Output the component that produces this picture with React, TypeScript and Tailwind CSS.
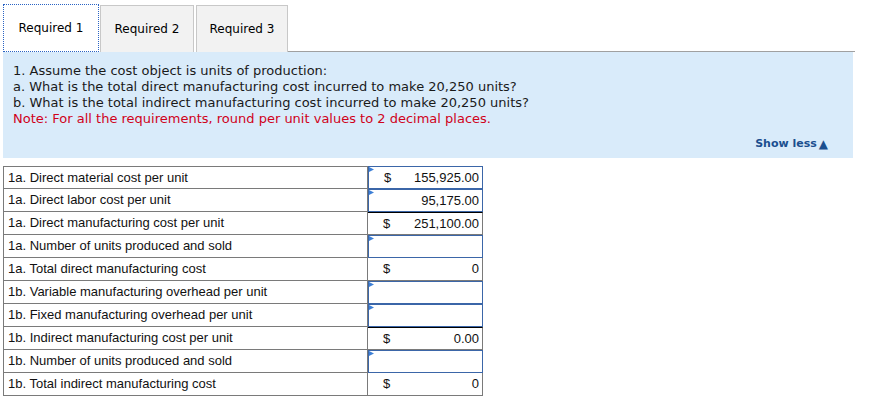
import React from "react";

type Row = { label: string; kind: "input" | "calc"; dollar?: boolean; value?: string; topBlack?: boolean };

const rows: Row[] = [
  { label: "1a. Direct material cost per unit", kind: "input", dollar: true, value: "155,925.00" },
  { label: "1a. Direct labor cost per unit", kind: "input", value: "95,175.00" },
  { label: "1a. Direct manufacturing cost per unit", kind: "calc", dollar: true, value: "251,100.00", topBlack: true },
  { label: "1a. Number of units produced and sold", kind: "input", value: "" },
  { label: "1a. Total direct manufacturing cost", kind: "calc", dollar: true, value: "0" },
  { label: "1b. Variable manufacturing overhead per unit", kind: "input", value: "" },
  { label: "1b. Fixed manufacturing overhead per unit", kind: "input", value: "" },
  { label: "1b. Indirect manufacturing cost per unit", kind: "calc", dollar: true, value: "0.00", topBlack: true },
  { label: "1b. Number of units produced and sold", kind: "input", value: "" },
  { label: "1b. Total indirect manufacturing cost", kind: "calc", dollar: true, value: "0" },
];

function ValueCell({ row }: { row: Row }) {
  const content = (
    <div className="flex h-full items-center justify-between pl-[15px] pr-[3px]">
      <span>{row.dollar ? "$" : ""}</span>
      <span>{row.value}</span>
    </div>
  );
  if (row.kind === "input") {
    return (
      <div className="relative h-[23px] w-[115px] border border-[#3b66a8]">
        <svg className="absolute left-0 top-0" width="6" height="6" viewBox="0 0 6 6">
          <polygon points="0,0 5,2.5 0,5" fill="#3d7fd6" />
        </svg>
        {content}
      </div>
    );
  }
  return (
    <div
      className={`h-[23px] w-[115px] border-r border-b border-[#7a7a7a] ${row.topBlack ? "border-t border-t-black" : ""}`}
    >
      {content}
    </div>
  );
}

export default function App() {
  return (
    <div className="h-[402px] w-[869px] bg-white" style={{ fontFamily: "'DejaVu Sans', Verdana, sans-serif" }}>
      <div className="flex items-end pl-[3px] pt-[4px]">
        <div className="flex h-[48px] w-[96px] items-center justify-center border border-dotted border-[#2a63c4] bg-white text-[12px] text-black">
          Required 1
        </div>
        <div className="ml-[1px] flex h-[47px] w-[94px] items-center justify-center border border-b-0 border-[#c8c8c8] bg-[#f2f2f2] text-[12px] text-black">
          Required 2
        </div>
        <div className="ml-[2px] flex h-[47px] w-[92px] items-center justify-center border border-b-0 border-[#c8c8c8] bg-[#f2f2f2] text-[12px] text-black">
          Required 3
        </div>
        <div className="h-[1px] flex-1 max-w-[567px] bg-[#a0a0a0]" />
      </div>
      <div className="ml-[3px] flex h-[106px] w-[850px] flex-col bg-[#d9ebfa] px-[10px] pt-[11px]">
        <div className="text-[13px] leading-[16px] text-[#1a1a1a]">
          <div>1. Assume the cost object is units of production:</div>
          <div>a. What is the total direct manufacturing cost incurred to make 20,250 units?</div>
          <div>b. What is the total indirect manufacturing cost incurred to make 20,250 units?</div>
          <div className="text-[#d0021b]">Note: For all the requirements, round per unit values to 2 decimal places.</div>
        </div>
        <div className="mt-[9px] flex items-center justify-end pr-[15px] text-[11px] font-bold text-[#1b4f8f]">
          <span>Show less</span>
          <span className="ml-[2px] text-[12px] leading-none">▲</span>
        </div>
      </div>
      <div
        className="ml-[3px] mt-[8px] w-[480px] text-[13px] text-[#111]"
        style={{ fontFamily: "'Liberation Sans', Arial, sans-serif" }}
      >
        {rows.map((row, i) => (
          <div key={i} className="flex">
            <div
              className={`flex h-[23px] w-[365px] items-center border-l border-r border-b border-[#7a7a7a] pl-[4px] ${i === 0 ? "border-t" : ""}`}
            >
              {row.label}
            </div>
            <ValueCell row={row} />
          </div>
        ))}
      </div>
    </div>
  );
}
